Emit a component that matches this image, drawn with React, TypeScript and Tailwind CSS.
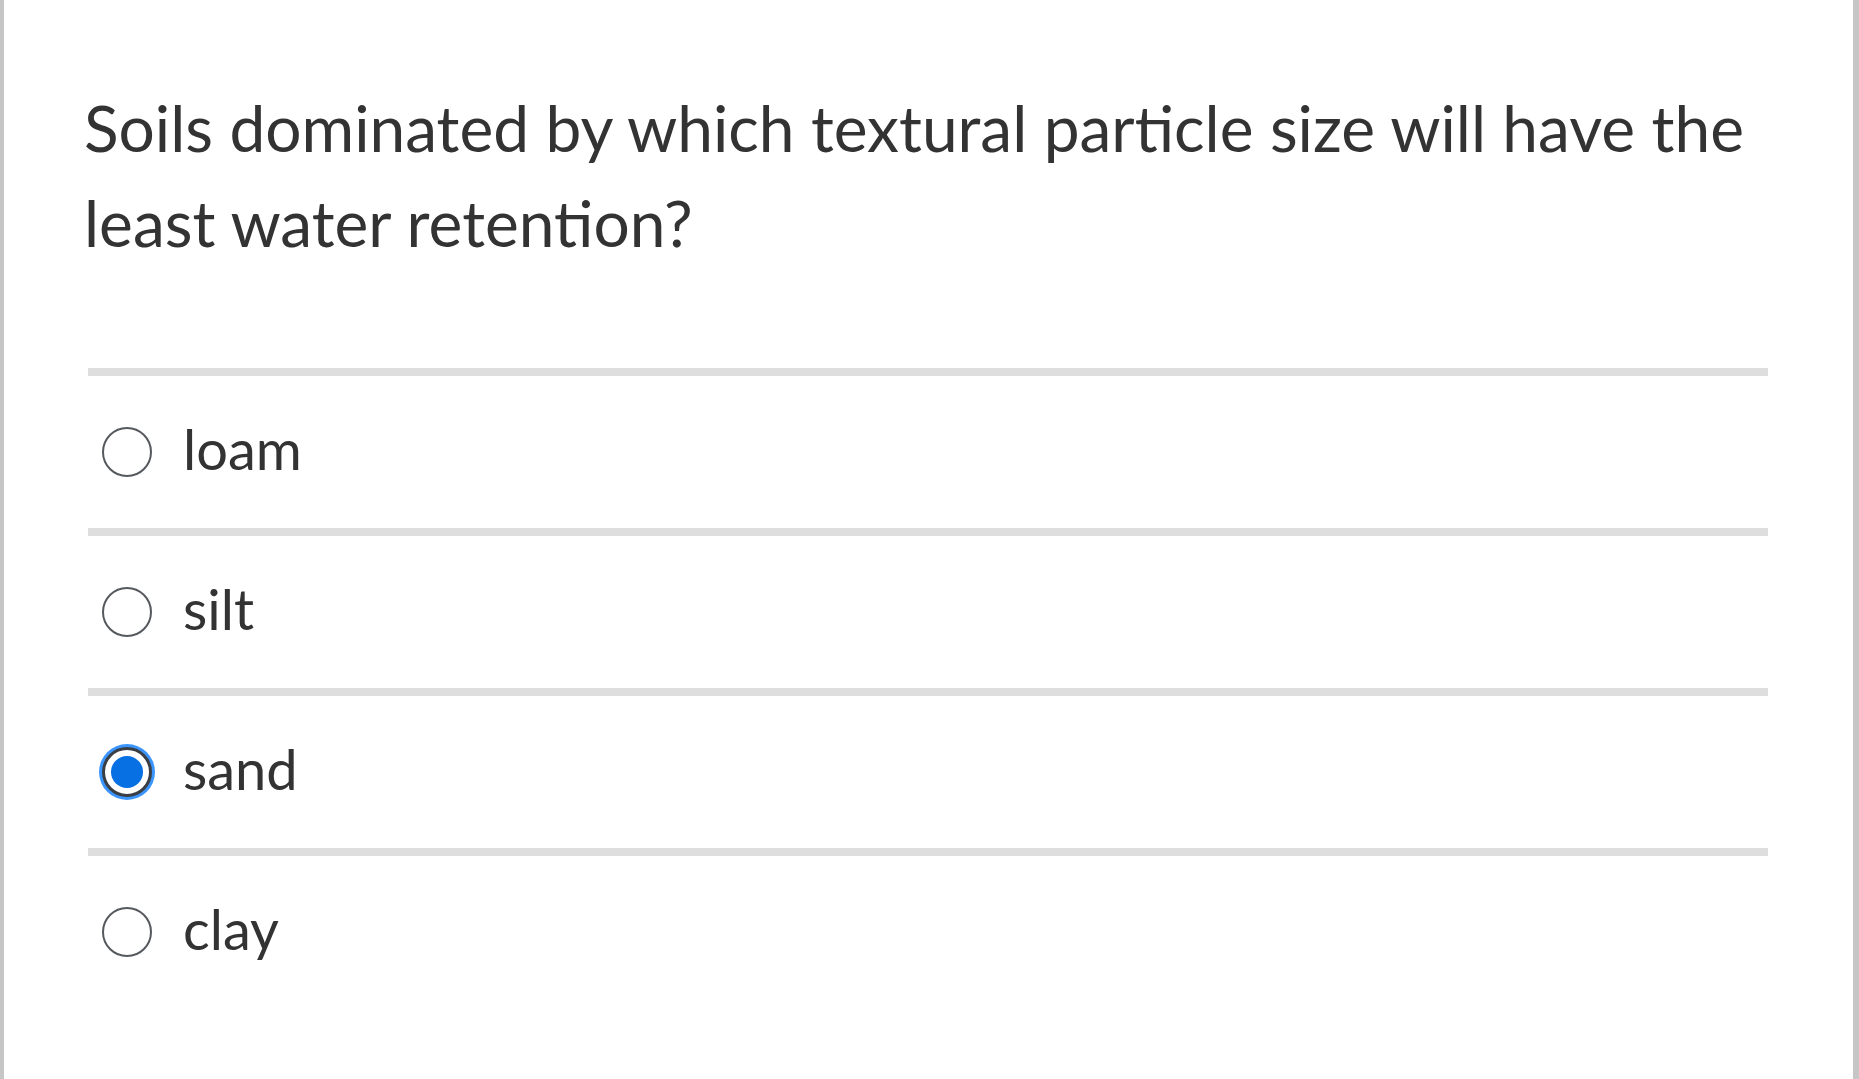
const answers = [
  { id: "loam", label: "loam" },
  { id: "silt", label: "silt" },
  { id: "sand", label: "sand" },
  { id: "clay", label: "clay" },
];

function Radio({ checked }: { checked: boolean }) {
  if (checked) {
    return (
      <span className="flex items-center justify-center w-[50px] h-[50px] rounded-full border-[3px] border-[#3a3f45] bg-white shadow-[0_0_0_3px_#3a95ff] shrink-0">
        <span className="w-[32px] h-[32px] rounded-full bg-[#0770e3]" />
      </span>
    );
  }
  return <span className="w-[50px] h-[50px] rounded-full border-[2.5px] border-[#55595e] bg-white shrink-0" />;
}

export default function App() {
  const selected = "sand";

  return (
    <div
      className="h-[1079px] w-full bg-white border-l-[4px] border-r-[6px] border-[#c6c6c6] overflow-hidden"
      style={{ fontFamily: "Lato, 'Noto Sans', sans-serif" }}
    >
      <div className="pl-[80px] pt-[80px]">
        {/* Question */}
        <p className="w-[1710px] text-[64px] leading-[95px] text-[#333333]">
          Soils dominated by which textural particle size will have the least water retention?
        </p>

        {/* Answers */}
        <div className="mt-[98px] ml-[4px] w-[1680px]">
          {answers.map((a) => (
            <label key={a.id} className="flex items-center h-[160px] border-t-[8px] border-[#dedede] pl-[14px] gap-[31px]">
              <Radio checked={a.id === selected} />
              <span className="text-[56px] leading-none text-[#333333] pb-[6px]">{a.label}</span>
            </label>
          ))}
        </div>
      </div>
    </div>
  );
}
